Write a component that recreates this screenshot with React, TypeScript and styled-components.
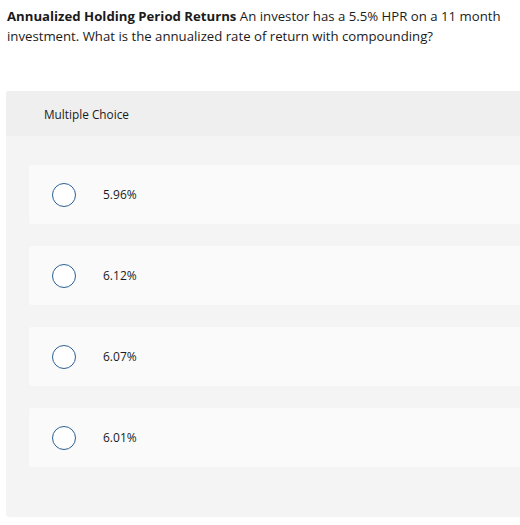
import React from 'react';
import styled, { createGlobalStyle } from 'styled-components';

const GlobalStyle = createGlobalStyle`
  body {
    margin: 0;
    background: #ffffff;
    font-family: 'Open Sans', 'Liberation Sans', sans-serif;
    color: #1b1b1b;
  }
`;

const Page = styled.div`
  width: 520px;
  height: 525px;
  overflow: hidden;
`;

const Question = styled.p`
  margin: 0;
  padding: 6px 4px 0 7px;
  font-size: 13.2px;
  line-height: 20px;
  height: 91px;
  box-sizing: border-box;
`;

const Bold = styled.strong`
  font-weight: 700;
`;

const Panel = styled.div`
  margin-left: 6px;
  width: 530px;
  height: 426px;
  border-radius: 3px;
  background: #f4f4f4;
  overflow: hidden;
`;

const PanelHeader = styled.div`
  height: 45px;
  background: #efefef;
  display: flex;
  align-items: center;
  padding-left: 38px;
  font-size: 11.8px;
`;

const Options = styled.div`
  display: flex;
  flex-direction: column;
  gap: 22px;
  padding: 29px 0 0 23px;
`;

const Option = styled.label`
  display: flex;
  align-items: center;
  height: 59px;
  background: #fafafa;
  border-radius: 3px;
  padding-left: 23px;
  font-size: 12px;
`;

const Radio = styled.span`
  width: 22px;
  height: 22px;
  border: 1.5px solid #2b5f93;
  border-radius: 50%;
  background: #ffffff;
  margin-right: 27px;
  flex-shrink: 0;
`;

const answers = ['5.96%', '6.12%', '6.07%', '6.01%'];

export default function App() {
  return (
    <Page>
      <GlobalStyle />
      <Question>
        <Bold>Annualized Holding Period Returns</Bold> An investor has a 5.5% HPR on a 11 month
        investment. What is the annualized rate of return with compounding?
      </Question>
      <Panel>
        <PanelHeader>Multiple Choice</PanelHeader>
        <Options>
          {answers.map((a) => (
            <Option key={a}>
              <Radio />
              {a}
            </Option>
          ))}
        </Options>
      </Panel>
    </Page>
  );
}
